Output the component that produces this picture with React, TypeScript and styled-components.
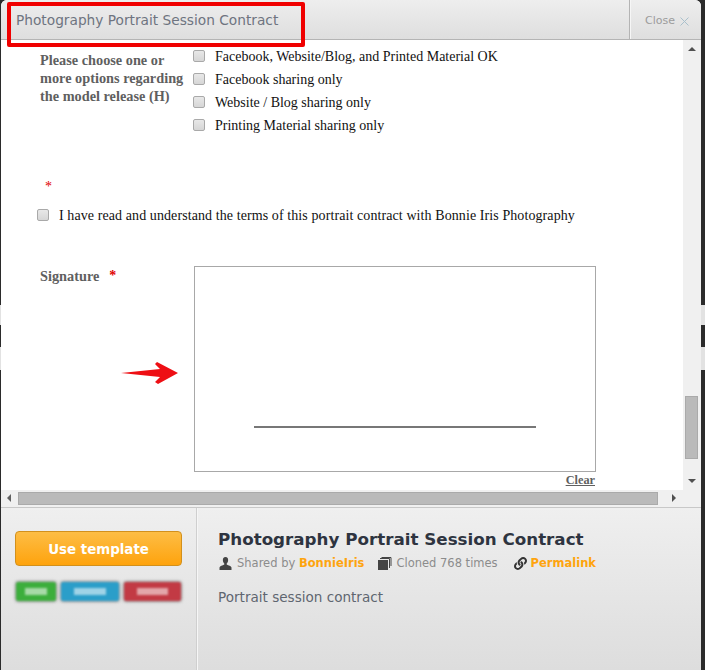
import { createGlobalStyle, styled } from "styled-components";
import { FaLink } from "react-icons/fa";

const Global = createGlobalStyle`
  html, body { margin: 0; padding: 0; background: #2b2b2b; }
  body { width: 705px; height: 670px; overflow: hidden; position: relative; }
`;

const SidePatch = styled.div<{ $side: string; $top: number; $h: number }>`
  position: absolute;
  ${(p) => p.$side}: 0;
  top: ${(p) => p.$top}px;
  height: ${(p) => p.$h}px;
  width: ${(p) => (p.$side === "left" ? 1 : 4)}px;
  background: #e2e2e2;
`;

const Modal = styled.div`
  width: 700px;
  height: 670px;
  margin-left: 1px;
  background: #fff;
  display: flex;
  flex-direction: column;
  position: relative;
  border-top-right-radius: 6px;
  border-top-left-radius: 6px;
  overflow: hidden;
`;

const Header = styled.div`
  height: 39px;
  flex: none;
  display: flex;
  background: linear-gradient(#eeeeee, #dedede);
  border-bottom: 1px solid #b4b4b4;
`;

const HeaderTitle = styled.div`
  flex: 1;
  padding: 12px 0 0 15px;
  font: 13.72px "DejaVu Sans", sans-serif;
  color: #6e7480;
  border-right: 1px solid #b4b4b4;
`;

const CloseBox = styled.div`
  width: 71px;
  border-left: 1px solid #f6f6f6;
  padding: 14px 0 0 14px;
  box-sizing: border-box;
  font: 11px "DejaVu Sans", sans-serif;
  color: #9c9c9c;
  display: flex;
  gap: 5px;
`;

const Highlight = styled.div`
  position: absolute;
  left: 6px;
  top: 2px;
  width: 298px;
  height: 45px;
  box-sizing: border-box;
  border: 4px solid #f00000;
  border-radius: 2px;
`;

const Viewport = styled.div`
  flex: none;
  height: 467px;
  display: grid;
  grid-template-columns: 1fr 18px;
  grid-template-rows: 1fr 17px;
  min-height: 0;
`;

const Content = styled.div`
  overflow: hidden;
  min-height: 0;
  font-family: "Liberation Serif", serif;
`;

const ReleaseRow = styled.div`
  display: flex;
  padding: 8px 0 0 39px;
  height: 135px;
  box-sizing: border-box;
`;

const FieldLabel = styled.div`
  width: 153px;
  font: bold 14.3px/18px "Liberation Serif", serif;
  color: #5f5f5f;
  padding-top: 3px;
  flex: none;
`;

const Options = styled.div`
  display: flex;
  flex-direction: column;
  gap: 5px;
`;

const Option = styled.div`
  display: flex;
  align-items: center;
  gap: 10px;
  height: 18px;
  font-size: 14px;
  color: #111;
`;

const Box = styled.span`
  width: 10px;
  height: 10px;
  flex: none;
  border: 1px solid #a9a9a9;
  border-radius: 2px;
  background: linear-gradient(#e8e8e8, #d6d6d6);
  margin-top: -3px;
`;

const Star = styled.span`
  color: #e00000;
  font-size: 14px;
`;

const StarRow = styled.div`
  height: 29px;
  padding: 2px 0 0 44px;
  box-sizing: border-box;
`;

const TermsRow = styled(Option)`
  margin-left: 36px;
  height: 24px;
  letter-spacing: 0.09px;
`;

const SignatureRow = styled.div`
  display: flex;
  padding: 38px 0 0 39px;
`;

const SignatureLabel = styled.div`
  width: 154px;
  flex: none;
  font: bold 14.3px/20px "Liberation Serif", serif;
  color: #5f5f5f;
  display: flex;
  gap: 10px;
  position: relative;
`;

const Arrow = styled.svg`
  position: absolute;
  left: 81px;
  top: 95px;
`;

const Pad = styled.div`
  width: 402px;
  height: 206px;
  box-sizing: border-box;
  border: 1px solid #a8a8a8;
  display: flex;
  align-items: flex-end;
  justify-content: center;
  padding-bottom: 43px;
  margin-bottom: 1px;
`;

const PadLine = styled.div`
  width: 282px;
  height: 2px;
  background: #777;
`;

const Clear = styled.a`
  display: block;
  text-align: right;
  font: bold 12.3px/14px "Liberation Serif", serif;
  color: #5f5f5f;
  text-decoration: underline;
  width: 401px;
`;

const VBar = styled.div`
  grid-row: 1 / 3;
  grid-column: 2;
  background: #f0f0f0;
  position: relative;
`;

const VThumb = styled.div`
  position: absolute;
  top: 356px;
  left: 2px;
  width: 11px;
  height: 61px;
  background: #bababa;
  border: 1px solid #aaa;
`;

const HBar = styled.div`
  background: #f0f0f0;
  position: relative;
`;

const HThumb = styled.div`
  position: absolute;
  left: 17px;
  top: 2px;
  width: 638px;
  height: 11px;
  background: #bababa;
  border: 1px solid #aaa;
`;

const Tri = styled.span<{ $dir: string; $at: string }>`
  position: absolute;
  width: 0;
  height: 0;
  border: 4px solid transparent;
  ${(p) => p.$at}
  ${(p) =>
    p.$dir === "up"
      ? "border-bottom-color:#505050;border-top-width:0;"
      : p.$dir === "down"
      ? "border-top-color:#505050;border-bottom-width:0;"
      : p.$dir === "left"
      ? "border-right-color:#606060;border-left-width:0;"
      : "border-left-color:#505050;border-right-width:0;"}
`;

const Footer = styled.div`
  flex: 1;
  display: flex;
  border-top: 1px solid #c8c8c8;
  background: linear-gradient(#efefef, #dddddd);
`;

const FooterLeft = styled.div`
  width: 196px;
  flex: none;
  padding: 23px 0 0 14px;
  box-sizing: border-box;
  border-right: 1px solid #cfcfcf;
  box-shadow: 1px 0 0 #f6f6f6;
`;

const UseButton = styled.button`
  width: 167px;
  height: 35px;
  box-sizing: border-box;
  border: 1px solid #d2901c;
  border-radius: 4px;
  background: linear-gradient(#fdbd45, #fea30d);
  color: #fff;
  font: bold 13.4px "DejaVu Sans", sans-serif;
  padding: 2px 0 0;
`;

const Badges = styled.div`
  display: flex;
  gap: 5px;
  margin: 16px 0 0 1px;
  filter: blur(1.2px);
`;

const Badge = styled.div<{ $w: number; $c: string }>`
  width: ${(p) => p.$w}px;
  height: 19px;
  background: ${(p) => p.$c};
  border-radius: 2px;
  box-shadow: 0 0 3px #333;
  display: flex;
  align-items: center;
  justify-content: center;
  &::after {
    content: "";
    width: 55%;
    height: 7px;
    background: rgba(255, 255, 255, 0.55);
  }
`;

const FooterRight = styled.div`
  flex: 1;
  padding: 20px 0 0 21px;
`;

const Title = styled.div`
  font: bold 16.73px/22px "DejaVu Sans", sans-serif;
  color: #2e3440;
`;

const Meta = styled.div`
  display: flex;
  align-items: center;
  margin-top: 5px;
  padding-left: 1px;
  font: 11.5px/16px "DejaVu Sans", sans-serif;
  color: #8c8c8c;
`;

const MetaItem = styled.span<{ $gap: number; $after: number }>`
  display: flex;
  align-items: center;
  gap: ${(p) => p.$gap}px;
  margin-right: ${(p) => p.$after}px;
`;

const Link = styled.b`
  color: #fea40e;
`;

const Description = styled.div`
  margin-top: 18px;
  font: 13.57px/16px "DejaVu Sans", sans-serif;
  color: #5f6670;
`;

export default function App() {
  return (
    <>
      <Global />
      <SidePatch $side="left" $top={305} $h={20} />
      <SidePatch $side="left" $top={347} $h={23} />
      <SidePatch $side="right" $top={305} $h={20} />
      <SidePatch $side="right" $top={347} $h={23} />
      <Modal>
        <Header>
          <HeaderTitle>Photography Portrait Session Contract</HeaderTitle>
          <CloseBox>
            Close
            <svg width="9" height="17" viewBox="0 0 9 17">
              <path d="M0.5 3.5l8 8M8.5 3.5l-8 8" stroke="#a9c0cc" fill="none" />
            </svg>
          </CloseBox>
        </Header>
        <Highlight />
        <Viewport>
          <Content>
            <ReleaseRow>
              <FieldLabel>
                Please choose one or more options regarding the model release (H)
              </FieldLabel>
              <Options>
                <Option><Box />Facebook, Website/Blog, and Printed Material OK</Option>
                <Option><Box />Facebook sharing only</Option>
                <Option><Box />Website / Blog sharing only</Option>
                <Option><Box />Printing Material sharing only</Option>
              </Options>
            </ReleaseRow>
            <StarRow><Star>*</Star></StarRow>
            <TermsRow>
              <Box />
              I have read and understand the terms of this portrait contract with Bonnie Iris Photography
            </TermsRow>
            <SignatureRow>
              <SignatureLabel>
                Signature <Star>*</Star>
                <Arrow width="58" height="24" viewBox="0 0 58 24">
                  <path d="M0 12 L39 8 L34 3 L36 1 L57 12 L37 23 L34 21 L39 16 Z" fill="#ee0f14" />
                </Arrow>
              </SignatureLabel>
              <div>
                <Pad><PadLine /></Pad>
                <Clear>Clear</Clear>
              </div>
            </SignatureRow>
          </Content>
          <HBar>
            <Tri $dir="left" $at="left:6px;top:4px;" />
            <HThumb />
            <Tri $dir="right" $at="right:7px;top:4px;" />
          </HBar>
          <VBar>
            <Tri $dir="up" $at="left:5px;top:7px;" />
            <VThumb />
            <Tri $dir="down" $at="left:5px;top:439px;" />
          </VBar>
        </Viewport>
        <Footer>
          <FooterLeft>
            <UseButton>Use template</UseButton>
            <Badges>
              <Badge $w={40} $c="#3cae3c" />
              <Badge $w={58} $c="#2b9ec9" />
              <Badge $w={57} $c="#c23a44" />
            </Badges>
          </FooterLeft>
          <FooterRight>
            <Title>Photography Portrait Session Contract</Title>
            <Meta>
              <MetaItem $gap={5} $after={14}>
                <svg width="13" height="13" viewBox="0 0 13 13">
                  <path d="M6.5 0C4.6 0 3.7 1.5 3.9 3.4c.1 1.3.7 2.4 1.4 3v1.2C3.6 8.5.8 9.3.5 10.4V13h12v-2.6c-.3-1.1-3.1-1.9-4.8-2.8V6.4c.7-.6 1.3-1.7 1.4-3C9.3 1.5 8.4 0 6.5 0z" fill="#444" />
                </svg>
                <span>Shared by <Link>BonnieIris</Link></span>
              </MetaItem>
              <MetaItem $gap={4} $after={16}>
                <svg width="14" height="13" viewBox="0 0 14 13">
                  <path d="M0 3h10v10H0z" fill="#444" />
                  <path d="M2 1.5h9.5V11M3.5 0.5H13V9" stroke="#444" fill="none" />
                </svg>
                <span>Cloned 768 times</span>
              </MetaItem>
              <MetaItem $gap={4} $after={0}>
                <FaLink size={13} color="#333" />
                <Link>Permalink</Link>
              </MetaItem>
            </Meta>
            <Description>Portrait session contract</Description>
          </FooterRight>
        </Footer>
      </Modal>
    </>
  );
}
